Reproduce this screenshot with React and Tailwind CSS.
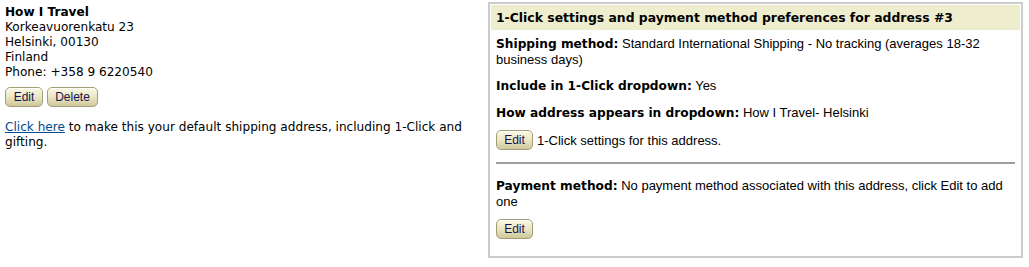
import React from "react";

const verdana = { fontFamily: '"DejaVu Sans", Verdana, sans-serif' };

function Btn({ children, className = "" }) {
  return (
    <button
      className={`h-[20px] rounded-[5px] border border-[#a39d77] bg-gradient-to-b from-[#fbf8e4] via-[#ebe6c4] to-[#cfc89c] text-[12px] leading-none text-[#141450] shadow-[inset_0_1px_0_#ffffff] ${className}`}
      style={{ fontFamily: '"Liberation Sans", Arial, sans-serif' }}
    >
      {children}
    </button>
  );
}

export default function App() {
  return (
    <div className="flex items-start bg-white text-[12.1px] leading-[15px] text-black" style={verdana}>
      {/* address */}
      <div className="w-[488px] shrink-0 pl-[5px] pr-[18px] pt-[5px]">
        <div className="font-bold">How I Travel</div>
        <div>Korkeavuorenkatu 23</div>
        <div>Helsinki, 00130</div>
        <div>Finland</div>
        <div>Phone: +358 9 6220540</div>
        <div className="mt-[7px] flex gap-[4px]">
          <Btn className="w-[38px]">Edit</Btn>
          <Btn className="w-[51px]">Delete</Btn>
        </div>
        <p className="mt-[13px]">
          <a href="#" className="text-[#004b91] underline">Click here</a> to make this your default shipping address, including 1-Click and gifting.
        </p>
      </div>

      {/* 1-click panel */}
      <div className="mt-[2px] w-[535px] border-2 border-[#cccccc] p-[1px]">
        <div className="bg-[#eeeecf] px-[5px] py-[5px] font-bold text-[12.4px] leading-[15px]">
          1-Click settings and payment method preferences for address #3
        </div>
        <div className="px-[5px] pt-[6px] pb-[16px] text-[13px]" style={{ fontFamily: '"Liberation Sans", Tahoma, sans-serif' }}>
          <p className="leading-[15px]">
            <b className="text-[12.2px]" style={verdana}>Shipping method:</b> Standard International Shipping - No tracking (averages 18-32 business days)
          </p>
          <p className="mt-[11px] leading-[15px]">
            <b className="text-[12.2px]" style={verdana}>Include in 1-Click dropdown:</b> Yes
          </p>
          <p className="mt-[11px] leading-[15px]">
            <b className="text-[12.2px]" style={verdana}>How address appears in dropdown:</b> How I Travel- Helsinki
          </p>
          <div className="mt-[9px] flex items-center gap-[4px]">
            <Btn className="w-[37px] text-[11px]">Edit</Btn>
            <span>1-Click settings for this address.</span>
          </div>
          <hr className="mt-[12px] border-t-0 border-b-2 border-[#9e9e9e]" />
          <p className="mt-[14px] leading-[15px]">
            <b className="text-[12.2px]" style={verdana}>Payment method:</b> No payment method associated with this address, click Edit to add one
          </p>
          <div className="mt-[10px]">
            <Btn className="w-[37px] text-[11px]">Edit</Btn>
          </div>
        </div>
      </div>
    </div>
  );
}
